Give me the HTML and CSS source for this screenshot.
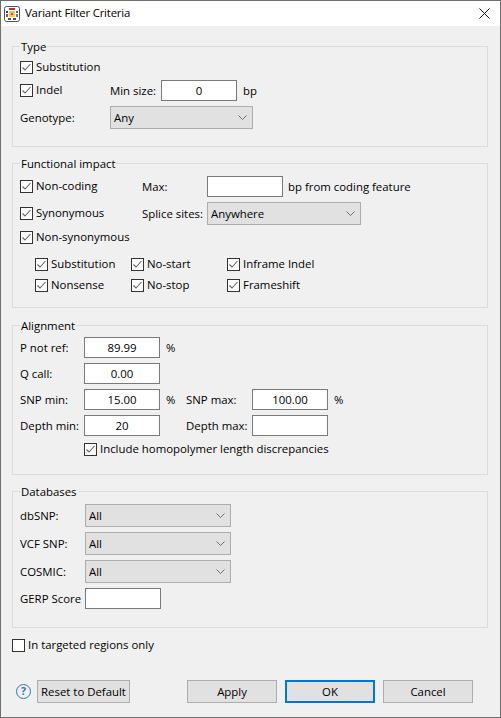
FILE: index.html
```html
<!DOCTYPE html>
<html lang="en">
<head>
  <meta charset="UTF-8" />
  <title>Variant Filter Criteria</title>
  <link rel="stylesheet" href="styles.css">
</head>
<body>

  <div class="titlebar">
    <svg class="app-icon" width="16" height="16" viewBox="0 0 16 16">
      <rect x="0.5" y="0.5" width="15" height="15" rx="2" fill="#fff" stroke="#45508f"/>
      <rect x="5" y="2" width="6" height="2" fill="#d8232a"/>
      <rect x="2" y="5" width="2" height="2" fill="#2c3f9e"/>
      <rect x="12" y="5" width="2" height="2" fill="#8a3fa0"/>
      <rect x="5" y="5" width="6" height="6" fill="#e6d04a"/>
      <rect x="7" y="7" width="2" height="2" fill="#c0409a"/>
      <rect x="2" y="8" width="2" height="3" fill="#c8402a"/>
      <rect x="12" y="8" width="2" height="3" fill="#3aa04a"/>
      <rect x="4" y="12" width="3" height="2" fill="#3c55b0"/>
      <rect x="9" y="12" width="3" height="2" fill="#7a2f90"/>
    </svg>
    <span class="title">Variant Filter Criteria</span>
    <svg class="close" width="11" height="11" viewBox="0 0 11 11">
      <path d="M0.5 0.5L10.5 10.5M10.5 0.5L0.5 10.5" stroke="#111" fill="none"/>
    </svg>
  </div>

  <form class="dialog">

    <!-- TYPE -->
    <fieldset class="group group-type">
      <legend>Type</legend>
      <div class="row">
        <label class="check"><input type="checkbox" checked />Substitution</label>
      </div>
      <div class="row row-tight">
        <label class="check col-type"><input type="checkbox" checked />Indel</label>
        <span class="min-label">Min size:</span>
        <input type="text" class="num" value="0" />
        <span class="unit">bp</span>
      </div>
      <div class="row row-select">
        <span class="col-type">Genotype:</span>
        <select class="select-genotype"><option>Any</option></select>
      </div>
    </fieldset>

    <!-- FUNCTIONAL IMPACT -->
    <fieldset class="group group-impact">
      <legend>Functional impact</legend>
      <div class="row">
        <label class="check col-impact"><input type="checkbox" checked />Non-coding</label>
        <span class="col-impact-label">Max:</span>
        <input type="text" class="num" />
        <span class="unit unit-long">bp from coding feature</span>
      </div>
      <div class="row row-select">
        <label class="check col-impact"><input type="checkbox" checked />Synonymous</label>
        <span class="col-impact-label">Splice sites:</span>
        <select class="select-splice"><option>Anywhere</option></select>
      </div>
      <div class="row row-tight">
        <label class="check"><input type="checkbox" checked />Non-synonymous</label>
      </div>
      <div class="sub-grid">
        <label class="check"><input type="checkbox" checked />Substitution</label>
        <label class="check"><input type="checkbox" checked />No-start</label>
        <label class="check"><input type="checkbox" checked />Inframe Indel</label>
        <label class="check"><input type="checkbox" checked />Nonsense</label>
        <label class="check"><input type="checkbox" checked />No-stop</label>
        <label class="check"><input type="checkbox" checked />Frameshift</label>
      </div>
    </fieldset>

    <!-- ALIGNMENT -->
    <fieldset class="group group-align">
      <legend>Alignment</legend>
      <div class="row">
        <span class="col-align">P not ref:</span>
        <input type="text" class="num" value="89.99" />
        <span class="unit">%</span>
      </div>
      <div class="row row-gap">
        <span class="col-align">Q call:</span>
        <input type="text" class="num" value="0.00" />
      </div>
      <div class="row row-gap">
        <span class="col-align">SNP min:</span>
        <input type="text" class="num" value="15.00" />
        <span class="unit unit-pct">%</span>
        <span class="col-align-2">SNP max:</span>
        <input type="text" class="num" value="100.00" />
        <span class="unit">%</span>
      </div>
      <div class="row row-gap">
        <span class="col-align">Depth min:</span>
        <input type="text" class="num" value="20" />
        <span class="unit unit-pct"></span>
        <span class="col-align-2">Depth max:</span>
        <input type="text" class="num" />
      </div>
      <div class="row row-homo">
        <label class="check"><input type="checkbox" checked />Include homopolymer length discrepancies</label>
      </div>
    </fieldset>

    <!-- DATABASES -->
    <fieldset class="group group-db">
      <legend>Databases</legend>
      <div class="row row-db">
        <span class="col-db">dbSNP:</span>
        <select class="select-db"><option>All</option></select>
      </div>
      <div class="row row-select row-db">
        <span class="col-db">VCF SNP:</span>
        <select class="select-db"><option>All</option></select>
      </div>
      <div class="row row-select row-db">
        <span class="col-db">COSMIC:</span>
        <select class="select-db"><option>All</option></select>
      </div>
      <div class="row row-gap">
        <span class="col-db">GERP Score</span>
        <input type="text" class="num" />
      </div>
    </fieldset>

    <label class="check targeted"><input type="checkbox" />In targeted regions only</label>

    <div class="footer">
      <span class="help">?</span>
      <button type="button" class="btn btn-reset">Reset to Default</button>
      <button type="button" class="btn btn-apply">Apply</button>
      <button type="button" class="btn btn-ok">OK</button>
      <button type="button" class="btn btn-cancel">Cancel</button>
    </div>

  </form>

</body>
</html>
```

FILE: styles.css
```css
* { box-sizing: border-box; }
html, body { margin: 0; height: 718px; overflow: hidden; }
body { background: #f0f0f0; border: 1px solid #6f6f6f; font-family: "Open Sans", sans-serif; font-size: 11.4px; line-height: 15px; color: #000; }

.titlebar { display: flex; align-items: center; height: 25px; background: #fff; padding: 0 10px 0 3px; }
.app-icon { margin-right: 5px; }
.title { flex: 1; padding-bottom: 2px; letter-spacing: -0.2px; }

.dialog { padding: 13px 12px 0 11px; }
.group { margin: 0 0 9px; padding: 0 7px; border: 1px solid #dcdcdc; min-width: 0; }
.group legend { padding: 0 1px; margin-left: 0; line-height: 15px; }
.group-type { padding-top: 3px; padding-bottom: 17px; }
.group-impact { padding-top: 5px; padding-bottom: 11px; }
.group-align { padding-top: 4px; padding-bottom: 14px; margin-top: 10px; }
.group-db { padding-top: 5px; padding-bottom: 18px; }

.row { display: flex; align-items: center; height: 21px; white-space: nowrap; }
.row-tight { margin-top: 2px; }
.row-select { margin-top: 5px; height: 23px; }
.row-gap { margin-top: 5px; }
.row-db { height: 23px; }
.row-homo { margin-top: 3px; padding-left: 64px; }

.check { display: flex; align-items: center; padding-bottom: 2px; }
.check input { appearance: none; width: 13px; height: 13px; margin: 2px 3px 0 0; flex: none; background: #fff no-repeat center; border: 1px solid #333; border-radius: 0; }
.check input:checked { background-image: url("data:image/svg+xml,%3Csvg xmlns='http://www.w3.org/2000/svg' width='11' height='11'%3E%3Cpath d='M1.5 5.5L4 8L9.5 2' fill='none' stroke='%23666' stroke-width='1.1'/%3E%3C/svg%3E"); }

.col-type { width: 90px; }
.col-impact { width: 122px; }
.col-impact-label { width: 65px; }
.col-align { width: 64px; }
.col-align-2 { width: 66px; }
.col-db { width: 65px; }
.min-label { width: 51px; }
.unit { margin-left: 6px; }
.unit-long { margin-left: 5px; }
.unit-pct { width: 20px; }

.num { width: 76px; height: 21px; padding: 0 2px; border: 1px solid #7a7a7a; border-radius: 0; background: #fff; font: inherit; text-align: center; color: #000; outline: none; }

select { appearance: none; height: 23px; padding: 0 3px; border: 1px solid #adadad; border-radius: 0; background: #e1e1e1 no-repeat right 5px center url("data:image/svg+xml,%3Csvg xmlns='http://www.w3.org/2000/svg' width='9' height='5'%3E%3Cpath d='M0.5 0.5L4.5 4.5L8.5 0.5' fill='none' stroke='%23707070'/%3E%3C/svg%3E"); font: inherit; color: #000; }
.select-genotype { width: 143px; }
.select-splice { width: 154px; }
.select-db { width: 146px; }

.sub-grid { display: grid; grid-template-columns: 96px 96px auto; grid-auto-rows: 21px; align-items: center; margin: 6px 0 0 15px; }

.targeted { height: 16px; margin-top: 9px; }

.footer { display: flex; align-items: center; margin-top: 27px; }
.help { width: 15px; height: 15px; margin-left: 4px; border: 1.5px solid #2f75b5; border-radius: 50%; color: #2f75b5; font-weight: 700; font-size: 10.5px; line-height: 12px; text-align: center; }
.btn { height: 23px; padding: 0; border: 1px solid #adadad; border-radius: 0; background: #e1e1e1; font: inherit; color: #000; width: 90px; margin-left: 8px; }
.btn-reset { width: 93px; margin-left: 6px; }
.btn-apply { margin-left: 57px; }
.btn-ok { border: 2px solid #0078d7; }
```
